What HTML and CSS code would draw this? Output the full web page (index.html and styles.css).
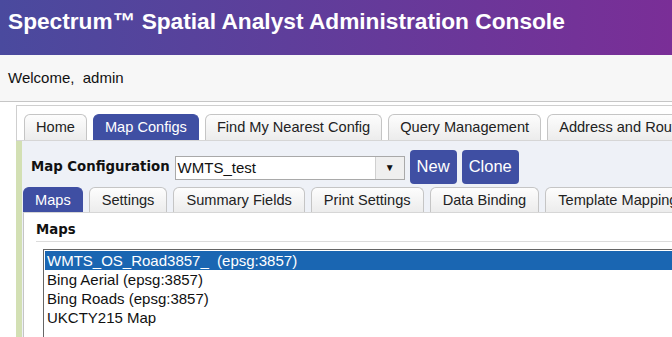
FILE: index.html
```html
<!DOCTYPE html>
<html lang="en">
<head>
    <meta charset="UTF-8">
    <title>Spectrum Spatial Analyst Administration Console</title>
    <link rel="stylesheet" href="styles.css">
</head>
<body>
    <div class="banner">
        <h1>Spectrum™ Spatial Analyst Administration Console</h1>
    </div>
    <div class="welcome">Welcome,&nbsp; admin</div>

    <div class="main">
        <div class="tabs">
            <ul class="tab-nav">
                <li>Home</li>
                <li class="active">Map Configs</li>
                <li>Find My Nearest Config</li>
                <li>Query Management</li>
                <li>Address and Routing</li>
            </ul>
            <div class="tab-panel">
                <div class="config-row">
                    <label class="config-label">Map Configuration</label>
                    <div class="combo">
                        <span class="combo-value">WMTS_test</span>
                        <span class="combo-arrow">&#9660;</span>
                    </div>
                    <button class="btn">New</button>
                    <button class="btn">Clone</button>
                </div>

                <div class="subtabs">
                    <ul class="tab-nav sub">
                        <li class="active">Maps</li>
                        <li>Settings</li>
                        <li>Summary Fields</li>
                        <li>Print Settings</li>
                        <li>Data Binding</li>
                        <li>Template Mapping</li>
                    </ul>
                    <div class="sub-panel">
                        <h4>Maps</h4>
                        <div class="listbox">
                            <div class="item selected">WMTS_OS_Road3857_&nbsp; (epsg:3857)</div>
                            <div class="item">Bing Aerial (epsg:3857)</div>
                            <div class="item">Bing Roads (epsg:3857)</div>
                            <div class="item">UKCTY215 Map</div>
                        </div>
                    </div>
                </div>
            </div>
        </div>
    </div>
</body>
</html>
```

FILE: styles.css
```css
html, body {
    height: 337px;
    overflow: hidden;
}
body {
    margin: 0;
    font-family: "Liberation Sans", Arial, sans-serif;
    font-size: 14px;
    color: #222;
    background: #fff;
}
.banner {
    height: 55px;
    background: linear-gradient(to right, #4a4a9e, #7a2e97);
}
.banner h1 {
    margin: 0;
    padding: 8px 8px 0;
    color: #fff;
    font-size: 22.7px;
    font-weight: bold;
    white-space: nowrap;
}
.welcome {
    height: 46px;
    line-height: 46px;
    padding-left: 8px;
    background: #f7f7f7;
    border-bottom: 1px solid #c6c6c6;
    color: #111;
    font-size: 15px;
}
.main {
    padding: 3px 0 0 16px;
}
.tabs {
    width: 900px;
    border: 1px solid #cfcfcf;
    border-right: none;
    border-bottom: none;
}
.tab-nav {
    list-style: none;
    margin: 0;
    padding: 8px 0 0 7px;
    display: flex;
    gap: 6px;
    background: #fff;
    border-bottom: 1px solid #d6d6d6;
}
.tab-nav li {
    height: 25px;
    line-height: 25px;
    padding: 0 11px;
    border: 1px solid #c5c5c5;
    border-bottom: none;
    border-radius: 6px 6px 0 0;
    background: linear-gradient(#fdfdfd, #ececec);
    color: #222;
    font-size: 14.6px;
    white-space: nowrap;
}
.tab-nav li.active {
    background: #3f4fa3;
    border-color: #3f4fa3;
    color: #fff;
}
.tab-panel {
    background: #eef1f7;
    border-left: 6px solid #d3e0b4;
    margin-left: -1px;
    padding-top: 8px;
}
.config-row {
    display: flex;
    align-items: center;
    padding-left: 9px;
    height: 35px;
}
.config-label {
    font-family: "DejaVu Sans", Verdana, sans-serif;
    font-weight: bold;
    font-size: 13.3px;
    margin-right: 5px;
    color: #111;
}
.combo {
    width: 228px;
    height: 22px;
    margin-top: 2px;
    display: flex;
    border: 1px solid #a9a9a9;
    background: #fff;
}
.combo-value {
    flex: 1;
    line-height: 22px;
    padding-left: 2px;
    color: #111;
    font-size: 15px;
}
.combo-arrow {
    width: 28px;
    border-left: 1px solid #d0d0d0;
    background: #efefef;
    text-align: center;
    font-size: 10px;
    line-height: 22px;
    color: #111;
}
.btn {
    margin-left: 5px;
    height: 34px;
    padding: 0 7px;
    border: none;
    border-radius: 4px;
    background: #3f4fa3;
    color: #fff;
    font-family: "Liberation Sans", Arial, sans-serif;
    font-size: 16.5px;
}
.subtabs {
    margin-top: 3px;
    margin-left: 1px;
}
.tab-nav.sub {
    padding: 0;
    background: transparent;
    border-bottom: none;
}
.tab-nav.sub li {
    height: 24px;
    line-height: 24px;
    padding: 0 12px;
}
.tab-nav.sub li.active {
    padding: 0 11px;
}
.sub-panel {
    background: #fff;
    border-left: 1px solid #c5c5c5;
    border-top: 1px solid #d6d6d6;
    padding: 9px 0 0 12px;
    height: 200px;
}
.sub-panel h4 {
    margin: 0;
    font-family: "DejaVu Sans", Verdana, sans-serif;
    font-size: 13.3px;
    font-weight: bold;
    color: #111;
    padding-bottom: 4px;
    border-bottom: 1px solid #dcdcdc;
}
.listbox {
    margin: 7px 0 0 7px;
    border: 1px solid #666;
    padding: 1px;
    height: 120px;
}
.item {
    height: 19px;
    line-height: 19px;
    padding-left: 2px;
    color: #111;
    font-size: 15px;
}
.item.selected {
    background: #1a66b2;
    color: #fff;
}
```
